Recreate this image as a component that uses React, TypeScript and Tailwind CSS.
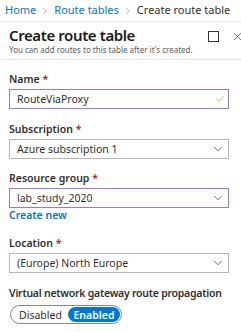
import { Check, ChevronDown, ChevronRight, X } from "lucide-react";

const FONT = "font-['Noto_Sans','Open_Sans',sans-serif]";

function Label({ text }: { text: string }) {
    return (
        <p className="text-[10.5px] font-semibold leading-[12px] text-[#323130] whitespace-nowrap">
            {text} <span className="text-[#a4262c]">*</span>
        </p>
    );
}

function Select({ value, active }: { value: string; active?: boolean }) {
    return (
        <div className={`mt-[4px] h-[20px] w-[220px] border flex items-center justify-between pl-[7px] pr-[3px] ${active ? "border-[#9b7bc8]" : "border-[#b8b8b8]"}`}>
            <span className="text-[10.5px] leading-[12px] text-[#323130]">{value}</span>
            <ChevronDown size={14} strokeWidth={1.2} className="text-[#323130]" />
        </div>
    );
}

export default function App() {
    return (
        <div className={`w-[241px] h-[332px] bg-white overflow-hidden ${FONT}`}>
            <div className="h-[22px] flex items-center gap-[4px] pl-[5px] border-b border-[#ececec] text-[11px] whitespace-nowrap">
                <span className="text-[#0078d4]">Home</span>
                <ChevronRight size={10} className="text-[#a0a0a0]" />
                <span className="text-[#0078d4]">Route tables</span>
                <ChevronRight size={10} className="text-[#a0a0a0]" />
                <span className="text-[#323130]">Create route table</span>
            </div>

            <div className="h-[38px] border-b border-[#e3e3e3] pl-[9px] relative">
                <p className="pt-[4px] text-[15px] leading-[19px] tracking-[-0.4px] font-semibold text-[#1b1a19] whitespace-nowrap">Create route table</p>
                <p className="text-[8px] leading-[10px] text-[#605e5c] whitespace-nowrap">You can add routes to this table after it's created.</p>
                <svg className="absolute left-[208px] top-[9px]" width="11" height="11" viewBox="0 0 11 11">
                    <rect x="0.5" y="0.5" width="10" height="10" fill="none" stroke="#323130" strokeWidth="1" />
                </svg>
                <X size={13} strokeWidth={1.2} className="absolute left-[231px] top-[8px] text-[#323130]" />
            </div>

            <div className="px-[9px] pt-[13px]">
                <Label text="Name" />
                <div className="mt-[4px] h-[20px] w-[220px] border border-[#9b7bc8] flex items-center justify-between pl-[7px] pr-[3px]">
                    <span className="text-[10.5px] leading-[12px] text-[#323130]">RouteViaProxy</span>
                    <Check size={10} strokeWidth={1.4} className="text-[#5aa700]" />
                </div>

                <div className="mt-[14px]">
                    <Label text="Subscription" />
                    <Select value="Azure subscription 1" />
                </div>

                <div className="mt-[13px]">
                    <Label text="Resource group" />
                    <Select value="lab_study_2020" active />
                    <p className="mt-[1px] text-[10.5px] leading-[12px] font-semibold text-[#0078d4]">Create new</p>
                </div>

                <div className="mt-[16px]">
                    <Label text="Location" />
                    <Select value="(Europe) North Europe" />
                </div>

                <div className="mt-[14px]">
                    <p className="text-[10.5px] font-semibold leading-[12px] tracking-[-0.25px] text-[#323130] whitespace-nowrap">Virtual network gateway route propagation</p>
                    <div className="mt-[6px] ml-[1px] w-[112px] h-[19px] rounded-full border border-[#8a8886] flex items-center pl-[2px] pr-[1px]">
                        <span className="flex-1 text-center text-[10.5px] leading-[12px] text-[#323130]">Disabled</span>
                        <span className="w-[52px] h-[15px] rounded-full bg-[#0078d4] text-white text-[10.5px] leading-[12px] font-semibold flex items-center justify-center">Enabled</span>
                    </div>
                </div>
            </div>
        </div>
    );
}
